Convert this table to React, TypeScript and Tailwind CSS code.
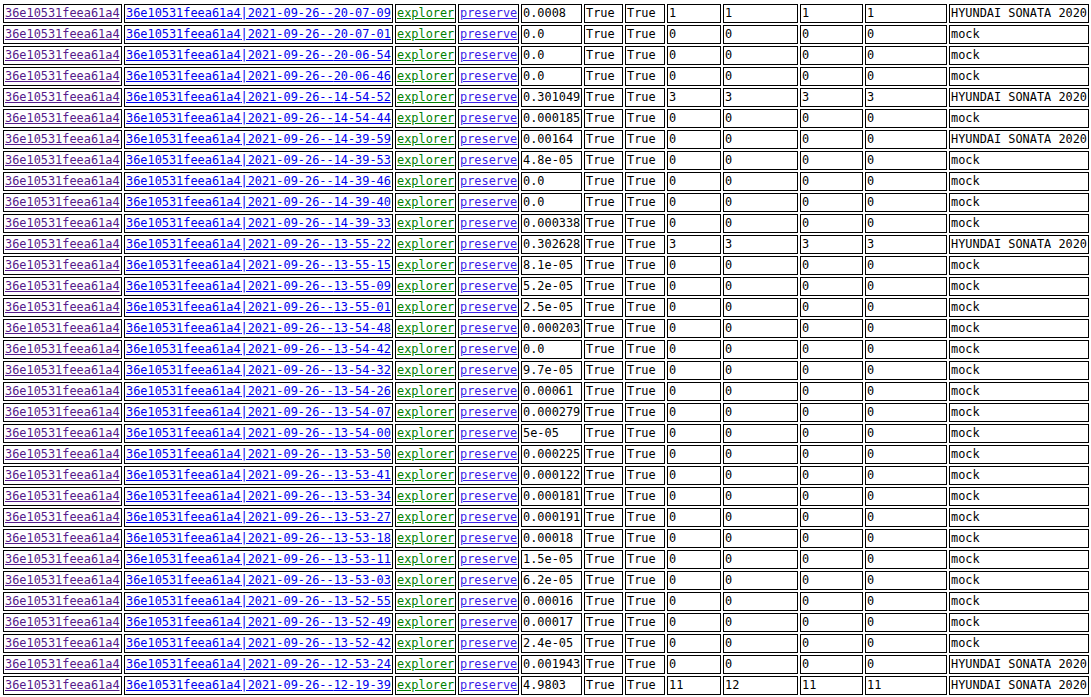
import React from "react";

type Row = {
  ts: string;
  score: string;
  a: string;
  b: string;
  c: string;
  d: string;
  car: string;
};

const HY = "HYUNDAI SONATA 2020";

const mk = (ts: string, score: string, n = "0", car = "mock", n2?: string): Row => ({
  ts,
  score,
  a: n,
  b: n2 ?? n,
  c: n,
  d: n,
  car,
});

const rows: Row[] = [
  mk("20-07-09", "0.0008", "1", HY),
  mk("20-07-01", "0.0"),
  mk("20-06-54", "0.0"),
  mk("20-06-46", "0.0"),
  mk("14-54-52", "0.301049", "3", HY),
  mk("14-54-44", "0.000185"),
  mk("14-39-59", "0.00164", "0", HY),
  mk("14-39-53", "4.8e-05"),
  mk("14-39-46", "0.0"),
  mk("14-39-40", "0.0"),
  mk("14-39-33", "0.000338"),
  mk("13-55-22", "0.302628", "3", HY),
  mk("13-55-15", "8.1e-05"),
  mk("13-55-09", "5.2e-05"),
  mk("13-55-01", "2.5e-05"),
  mk("13-54-48", "0.000203"),
  mk("13-54-42", "0.0"),
  mk("13-54-32", "9.7e-05"),
  mk("13-54-26", "0.00061"),
  mk("13-54-07", "0.000279"),
  mk("13-54-00", "5e-05"),
  mk("13-53-50", "0.000225"),
  mk("13-53-41", "0.000122"),
  mk("13-53-34", "0.000181"),
  mk("13-53-27", "0.000191"),
  mk("13-53-18", "0.00018"),
  mk("13-53-11", "1.5e-05"),
  mk("13-53-03", "6.2e-05"),
  mk("13-52-55", "0.00016"),
  mk("13-52-49", "0.00017"),
  mk("13-52-42", "2.4e-05"),
  mk("12-53-24", "0.001943", "0", HY),
  mk("12-19-39", "4.9803", "11", HY, "12"),
];

const ROUTE = "36e10531feea61a4";
const td = "border border-black p-[1px] h-[19px] leading-[15px] whitespace-nowrap align-middle overflow-hidden";

export default function App() {
  return (
    <div className="bg-white h-[697px] overflow-hidden pt-[2px] pl-[1px] text-black font-['DejaVu_Sans_Mono',monospace] text-[11.9px]">
      <table className="table-fixed border-separate border-spacing-[2px] w-[1090px]">
        <colgroup>
          <col className="w-[119px]" />
          <col className="w-[269px]" />
          <col className="w-[61px]" />
          <col className="w-[61px]" />
          <col className="w-[61px]" />
          <col className="w-[39px]" />
          <col className="w-[40px]" />
          <col className="w-[54px]" />
          <col className="w-[75px]" />
          <col className="w-[63px]" />
          <col className="w-[82px]" />
          <col className="w-[140px]" />
        </colgroup>
        <tbody>
          {rows.map((r, i) => (
            <tr key={i}>
              <td className={td}>
                <a href="#" className="text-[#551a8b] underline">{ROUTE}</a>
              </td>
              <td className={td}>
                <a href="#" className="text-[#0000ee] underline">{ROUTE}|2021-09-26--{r.ts}</a>
              </td>
              <td className={td}>
                <a href="#" className="text-[#008000] underline">explorer</a>
              </td>
              <td className={td}>
                <a href="#" className="text-[#3b1de6] underline">preserve</a>
              </td>
              <td className={td}>{r.score}</td>
              <td className={td}>True</td>
              <td className={td}>True</td>
              <td className={td}>{r.a}</td>
              <td className={td}>{r.b}</td>
              <td className={td}>{r.c}</td>
              <td className={td}>{r.d}</td>
              <td className={td}>{r.car}</td>
            </tr>
          ))}
          <tr>
            {Array.from({ length: 12 }).map((_, j) => (
              <td key={j} className={td}></td>
            ))}
          </tr>
        </tbody>
      </table>
    </div>
  );
}
